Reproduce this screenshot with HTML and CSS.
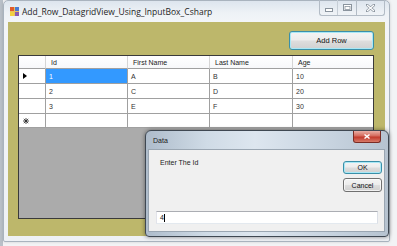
FILE: index.html
```html
<!DOCTYPE html>
<html>
<head>
<meta charset="utf-8">
<link rel="stylesheet" href="styles.css">
</head>
<body>
<div class="desktop">
  <div class="window">
    <div class="titlebar">
      <svg class="appicon" width="9" height="9" viewBox="0 0 9 9">
        <rect x="0" y="0" width="9" height="9" fill="#e8c060"/>
        <rect x="0" y="0" width="4" height="4" fill="#e05a2a"/>
        <rect x="5" y="0" width="4" height="4" fill="#4a7ad0"/>
        <rect x="0" y="5" width="4" height="4" fill="#f2d040"/>
        <rect x="5" y="5" width="4" height="4" fill="#8a5ab0"/>
      </svg>
      <span class="title">Add_Row_DatagridView_Using_InputBox_Csharp</span>
      <div class="controls">
        <div class="ctl-group">
          <span class="ctl ctl-min"><svg width="8" height="4" viewBox="0 0 8 4"><rect x="0.5" y="0.5" width="7" height="3" fill="#fff" stroke="#8a949e"/></svg></span>
          <span class="ctl ctl-max"><svg width="9" height="7" viewBox="0 0 9 7"><rect x="0.5" y="0.5" width="8" height="6" fill="#fff" stroke="#8a949e"/><rect x="2" y="2.5" width="5" height="3" fill="#fff" stroke="#8a949e" stroke-width="0.8"/></svg></span>
        </div>
        <span class="ctl ctl-close"><svg width="9" height="8" viewBox="0 0 9 8"><path d="M1 1 L8 7 M8 1 L1 7" stroke="#8a949e" stroke-width="2.6" stroke-linecap="square"/><path d="M1 1 L8 7 M8 1 L1 7" stroke="#fff" stroke-width="1.2"/></svg></span>
      </div>
    </div>
    <div class="client">
      <div class="toolbar">
        <button class="btn btn-focus addrow">Add Row</button>
      </div>
      <div class="dgv">
        <div class="dgv-table">
          <div class="cell rh hdr"></div>
          <div class="cell hdr">Id</div>
          <div class="cell hdr">First Name</div>
          <div class="cell hdr">Last Name</div>
          <div class="cell hdr last">Age</div>

          <div class="cell rh"><svg width="4" height="6" viewBox="0 0 4 6"><path d="M0 0 L4 3 L0 6 Z" fill="#000"/></svg></div>
          <div class="cell sel">1</div>
          <div class="cell">A</div>
          <div class="cell">B</div>
          <div class="cell last">10</div>

          <div class="cell rh"></div>
          <div class="cell">2</div>
          <div class="cell">C</div>
          <div class="cell">D</div>
          <div class="cell last">20</div>

          <div class="cell rh"></div>
          <div class="cell">3</div>
          <div class="cell">E</div>
          <div class="cell">F</div>
          <div class="cell last">30</div>

          <div class="cell rh"><svg width="6" height="6" viewBox="0 0 6 6"><path d="M3 0 V6 M0 3 H6 M0.8 0.8 L5.2 5.2 M5.2 0.8 L0.8 5.2" stroke="#222" stroke-width="0.8"/></svg></div>
          <div class="cell"></div>
          <div class="cell"></div>
          <div class="cell"></div>
          <div class="cell last"></div>
        </div>
      </div>
    </div>
  </div>

  <div class="dialog">
    <div class="dlg-titlebar">
      <span class="dlg-title">Data</span>
      <span class="dlg-close"><svg width="6" height="5" viewBox="0 0 6 5"><path d="M0.5 0.5 L5.5 4.5 M5.5 0.5 L0.5 4.5" stroke="#fff" stroke-width="1.4"/></svg></span>
    </div>
    <div class="dlg-client">
      <div class="dlg-top">
        <span class="dlg-label">Enter The Id</span>
        <div class="dlg-buttons">
          <button class="btn btn-focus ok">OK</button>
          <button class="btn cancel">Cancel</button>
        </div>
      </div>
      <div class="dlg-input"><span>4</span><span class="caret"></span></div>
    </div>
  </div>
</div>
</body>
</html>
```

FILE: styles.css
```css
html, body {
  margin: 0;
  padding: 0;
}
body {
  width: 397px;
  height: 246px;
  overflow: hidden;
  background: #eceef0;
  font-family: "Liberation Sans", Arial, sans-serif;
}
.desktop {
  position: relative;
  width: 397px;
  height: 246px;
  background: linear-gradient(90deg, #b9c0c8 0, #b9c0c8 3px, #f2f3f5 3px);
}

/* main window */
.window {
  position: absolute;
  left: 3px;
  top: 0;
  width: 385px;
  height: 240px;
  border: 1px solid #a9b3be;
  border-radius: 5px 5px 2px 2px;
  background: linear-gradient(180deg, #dde5ee 0, #eef2f6 12px, #f3f5f8 22px, #eef1f5 100%);
  display: flex;
  flex-direction: column;
  box-shadow: 0 0 3px rgba(0,0,0,0.15);
}
.titlebar {
  height: 21px;
  display: flex;
  align-items: center;
  padding-left: 6px;
}
.appicon {
  flex: none;
  margin-right: 3px;
}
.title {
  font-family: "Open Sans", "Noto Sans", sans-serif;
  font-size: 8.5px;
  color: #1e1e1e;
  white-space: nowrap;
}
.controls {
  margin-left: auto;
  margin-right: 4px;
  align-self: flex-start;
  display: flex;
  margin-top: -1px;
}
.ctl-group {
  display: flex;
  border: 1px solid #b3bcc6;
  border-top: none;
  border-right: none;
  border-radius: 0 0 0 3px;
}
.ctl {
  height: 15px;
  display: flex;
  align-items: center;
  justify-content: center;
  box-sizing: border-box;
}
.ctl-min {
  width: 18px;
  border-right: 1px solid #c6ced6;
  padding-top: 4px;
}
.ctl-max {
  width: 18px;
}
.ctl-close {
  width: 29px;
  height: 16px;
  border: 1px solid #b3bcc6;
  border-top: none;
  border-radius: 0 0 3px 0;
}

.client {
  margin: 0 4px;
  height: 214px;
  background: #bdb76b;
  display: flex;
  flex-direction: column;
}
.toolbar {
  display: flex;
  justify-content: flex-end;
  padding: 9px 11px 0 0;
}

/* buttons */
.btn {
  font-family: "Liberation Sans", Arial, sans-serif;
  color: #111;
  padding: 0;
  margin: 0;
  box-sizing: border-box;
  border: 1px solid #707070;
  border-radius: 3px;
  background: linear-gradient(180deg, #f4f4f4 0, #ececec 49%, #dedede 51%, #d0d0d0 100%);
  box-shadow: inset 0 0 0 1px rgba(255,255,255,0.7);
  display: flex;
  align-items: center;
  justify-content: center;
}
.btn-focus {
  border-color: #3a8fa8;
  box-shadow: inset 0 0 0 1px #a8e8f6;
}
.addrow {
  width: 85px;
  height: 19px;
  font-size: 7.5px;
}

/* data grid view */
.dgv {
  margin: 5px 0 0 10px;
  width: 356px;
  height: 164px;
  box-sizing: border-box;
  border: 1px solid #3a3a3a;
  background: #ababab;
}
.dgv-table {
  display: grid;
  grid-template-columns: 27px 82px 82px 83px 80px;
  grid-template-rows: 13px 15px 15px 15px 14px;
}
.cell {
  box-sizing: border-box;
  background: #fff;
  border-right: 1px solid #a0a0a0;
  border-bottom: 1px solid #a0a0a0;
  font-size: 7px;
  color: #333;
  padding-left: 3px;
  display: flex;
  align-items: center;
  white-space: nowrap;
}
.cell.last {
  border-right: none;
}
.cell.hdr {
  padding-left: 5px;
  color: #222;
  background: linear-gradient(180deg, #ffffff 0, #f7f8fa 100%);
  border-right-color: #d5d5d5;
  border-bottom-color: #a0a0a0;
}
.cell.rh {
  padding-left: 4px;
}
.cell.sel {
  background: #3399ff;
  color: #fff;
}

/* input dialog */
.dialog {
  position: absolute;
  left: 145px;
  top: 130px;
  width: 244px;
  height: 107px;
  box-sizing: border-box;
  border: 1px solid #3f4852;
  border-radius: 6px 6px 4px 4px;
  background: linear-gradient(90deg, #aebccb 0, #cfdbe6 25%, #dde6ef 45%, #c8d4e0 75%, #b6c3d0 100%);
  box-shadow: 0 0 4px rgba(0,0,0,0.45);
  display: flex;
  flex-direction: column;
  padding: 0 4px 5px 3px;
}
.dlg-titlebar {
  height: 19px;
  display: flex;
  align-items: center;
  padding-left: 4px;
}
.dlg-title {
  font-family: "Liberation Sans", Arial, sans-serif;
  font-size: 7px;
  color: #1a1a1a;
}
.dlg-close {
  margin-left: auto;
  margin-right: 3px;
  align-self: flex-start;
  width: 28px;
  height: 12px;
  box-sizing: border-box;
  border: 1px solid #7a2c24;
  border-top: none;
  border-radius: 0 0 3px 3px;
  background: linear-gradient(180deg, #e9aea4 0, #d46a5c 45%, #c23a2c 55%, #d77a68 100%);
  display: flex;
  align-items: center;
  justify-content: center;
}
.dlg-client {
  flex: 1;
  background: #f0f0f0;
  box-shadow: 0 0 0 1px #9aa6b2;
  display: flex;
  flex-direction: column;
  padding: 11px 2px 7px 7px;
}
.dlg-top {
  display: flex;
}
.dlg-label {
  font-size: 7px;
  color: #222;
  margin: -3px 0 0 4px;
  line-height: 9px;
}
.dlg-buttons {
  margin-left: auto;
  display: flex;
  flex-direction: column;
  gap: 4px;
}
.ok {
  width: 39px;
  height: 13px;
  font-size: 7px;
}
.cancel {
  width: 39px;
  height: 14px;
  font-size: 7px;
}
.dlg-input {
  margin-top: auto;
  width: 222px;
  height: 13px;
  box-sizing: border-box;
  background: #fff;
  border: 1px solid #abadb3;
  border-color: #abadb3 #dbdfe6 #e3e9ef #e2e3ea;
  font-size: 7px;
  color: #222;
  padding-left: 3px;
  display: flex;
  align-items: center;
}
.caret {
  display: inline-block;
  width: 1px;
  height: 8px;
  background: #000;
}
```
